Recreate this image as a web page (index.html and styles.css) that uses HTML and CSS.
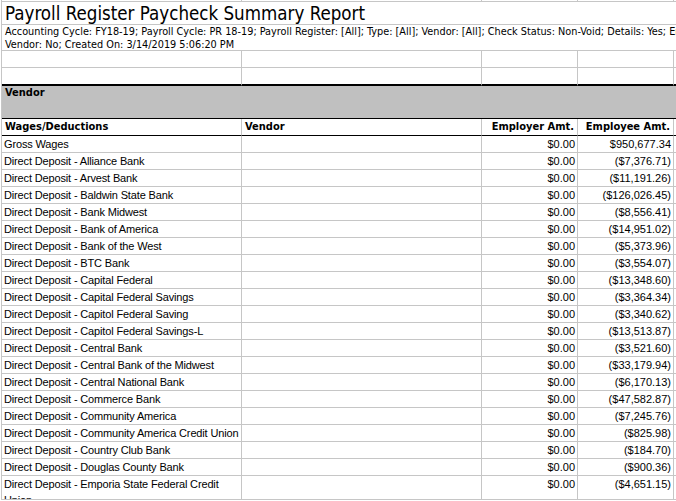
FILE: index.html
```html
<!DOCTYPE html>
<html>
<head>
<meta charset="utf-8">
<link rel="stylesheet" href="styles.css">
</head>
<body>
<div class="sheet">
  <div class="row r0"><div class="c"></div><div class="c"></div><div class="c"></div><div class="c"></div><div class="c"></div></div>
  <div class="row title"><div class="c span">Payroll Register Paycheck Summary Report</div></div>
  <div class="row sub"><div class="c span">Accounting Cycle: FY18-19; Payroll Cycle: PR 18-19; Payroll Register: [All]; Type: [All]; Vendor: [All]; Check Status: Non-Void; Details: Yes; Employee: [All]; Summarize By<br>Vendor: No; Created On: 3/14/2019 5:06:20 PM</div></div>
  <div class="row blank"><div class="c"></div><div class="c"></div><div class="c"></div><div class="c"></div><div class="c"></div></div>
  <div class="row blank thick"><div class="c"></div><div class="c"></div><div class="c"></div><div class="c"></div><div class="c"></div></div>
  <div class="row band"><div class="c span">Vendor</div></div>
  <div class="row head"><div class="c">Wages/Deductions</div><div class="c">Vendor</div><div class="c num">Employer Amt.</div><div class="c num">Employee Amt.</div><div class="c"></div></div>
  <div class="row d"><div class="c lbl">Gross Wages</div><div class="c"></div><div class="c num">$0.00</div><div class="c num">$950,677.34</div><div class="c"></div></div>
  <div class="row d"><div class="c lbl">Direct Deposit - Alliance Bank</div><div class="c"></div><div class="c num">$0.00</div><div class="c num">($7,376.71)</div><div class="c"></div></div>
  <div class="row d"><div class="c lbl">Direct Deposit - Arvest Bank</div><div class="c"></div><div class="c num">$0.00</div><div class="c num">($11,191.26)</div><div class="c"></div></div>
  <div class="row d"><div class="c lbl">Direct Deposit - Baldwin State Bank</div><div class="c"></div><div class="c num">$0.00</div><div class="c num">($126,026.45)</div><div class="c"></div></div>
  <div class="row d"><div class="c lbl">Direct Deposit - Bank Midwest</div><div class="c"></div><div class="c num">$0.00</div><div class="c num">($8,556.41)</div><div class="c"></div></div>
  <div class="row d"><div class="c lbl">Direct Deposit - Bank of America</div><div class="c"></div><div class="c num">$0.00</div><div class="c num">($14,951.02)</div><div class="c"></div></div>
  <div class="row d"><div class="c lbl">Direct Deposit - Bank of the West</div><div class="c"></div><div class="c num">$0.00</div><div class="c num">($5,373.96)</div><div class="c"></div></div>
  <div class="row d"><div class="c lbl">Direct Deposit - BTC Bank</div><div class="c"></div><div class="c num">$0.00</div><div class="c num">($3,554.07)</div><div class="c"></div></div>
  <div class="row d"><div class="c lbl">Direct Deposit - Capital Federal</div><div class="c"></div><div class="c num">$0.00</div><div class="c num">($13,348.60)</div><div class="c"></div></div>
  <div class="row d"><div class="c lbl">Direct Deposit - Capital Federal Savings</div><div class="c"></div><div class="c num">$0.00</div><div class="c num">($3,364.34)</div><div class="c"></div></div>
  <div class="row d"><div class="c lbl">Direct Deposit - Capitol Federal Saving</div><div class="c"></div><div class="c num">$0.00</div><div class="c num">($3,340.62)</div><div class="c"></div></div>
  <div class="row d"><div class="c lbl">Direct Deposit - Capitol Federal Savings-L</div><div class="c"></div><div class="c num">$0.00</div><div class="c num">($13,513.87)</div><div class="c"></div></div>
  <div class="row d"><div class="c lbl">Direct Deposit - Central Bank</div><div class="c"></div><div class="c num">$0.00</div><div class="c num">($3,521.60)</div><div class="c"></div></div>
  <div class="row d"><div class="c lbl">Direct Deposit - Central Bank of the Midwest</div><div class="c"></div><div class="c num">$0.00</div><div class="c num">($33,179.94)</div><div class="c"></div></div>
  <div class="row d"><div class="c lbl">Direct Deposit - Central National Bank</div><div class="c"></div><div class="c num">$0.00</div><div class="c num">($6,170.13)</div><div class="c"></div></div>
  <div class="row d"><div class="c lbl">Direct Deposit - Commerce Bank</div><div class="c"></div><div class="c num">$0.00</div><div class="c num">($47,582.87)</div><div class="c"></div></div>
  <div class="row d"><div class="c lbl">Direct Deposit - Community America</div><div class="c"></div><div class="c num">$0.00</div><div class="c num">($7,245.76)</div><div class="c"></div></div>
  <div class="row d"><div class="c lbl">Direct Deposit - Community America Credit Union</div><div class="c"></div><div class="c num">$0.00</div><div class="c num">($825.98)</div><div class="c"></div></div>
  <div class="row d"><div class="c lbl">Direct Deposit - Country Club Bank</div><div class="c"></div><div class="c num">$0.00</div><div class="c num">($184.70)</div><div class="c"></div></div>
  <div class="row d"><div class="c lbl">Direct Deposit - Douglas County Bank</div><div class="c"></div><div class="c num">$0.00</div><div class="c num">($900.36)</div><div class="c"></div></div>
  <div class="row d tall"><div class="c lbl wrap">Direct Deposit - Emporia State Federal Credit Union</div><div class="c"></div><div class="c num">$0.00</div><div class="c num">($4,651.15)</div><div class="c"></div></div>
</div>
</body>
</html>
```

FILE: styles.css
```css
html, body {
  margin: 0;
  padding: 0;
  background: #ffffff;
  overflow: hidden;
}

.sheet {
  margin-left: 1px;
  width: 675px;
  box-sizing: border-box;
  border-left: 1px solid #c6c6c6;
  font-family: "Liberation Sans", Arial, sans-serif;
  font-size: 11px;
  color: #000;
}

.row {
  display: grid;
  grid-template-columns: 240px 240px 96px 96px 1fr;
}

.c {
  box-sizing: border-box;
  border-right: 1px solid #c6c6c6;
  border-bottom: 1px solid #c6c6c6;
  overflow: hidden;
  white-space: nowrap;
  padding: 0 2px;
  line-height: 16px;
}

.lbl {
  letter-spacing: -0.15px;
}

.span {
  grid-column: 1 / -1;
  border-right: none;
}

.r0 .c { height: 2px; }

.title .c {
  height: 23px;
  font-family: "DejaVu Sans Condensed", "DejaVu Sans", sans-serif;
  font-stretch: semi-condensed;
  font-size: 18.6px;
  line-height: 20px;
  padding: 2px 3px 0;
}

.sub .c {
  height: 26px;
  font-family: "DejaVu Sans Condensed", "DejaVu Sans", sans-serif;
  font-stretch: semi-condensed;
  font-size: 10.8px;
  line-height: 13px;
  padding: 0 3px;
}

.blank .c { height: 17px; }

.thick .c {
  height: 18px;
  border-bottom: 2px solid #000;
}

.band .c {
  height: 33px;
  background: #c0c0c0;
  border-bottom-color: #000;
  font-family: "DejaVu Sans Condensed", "DejaVu Sans", sans-serif;
  font-stretch: semi-condensed;
  font-weight: bold;
  line-height: 13px;
  padding: 0 3px;
}

.head .c {
  height: 17px;
  border-bottom-color: #000;
  font-family: "DejaVu Sans Condensed", "DejaVu Sans", sans-serif;
  font-stretch: semi-condensed;
  font-weight: bold;
  padding: 0 3px;
}

.head .num { padding-right: 3px; }

.d .c { height: 17px; }

.d.tall .c { height: 24px; }

.wrap { white-space: normal; }

.num { text-align: right; }
```
